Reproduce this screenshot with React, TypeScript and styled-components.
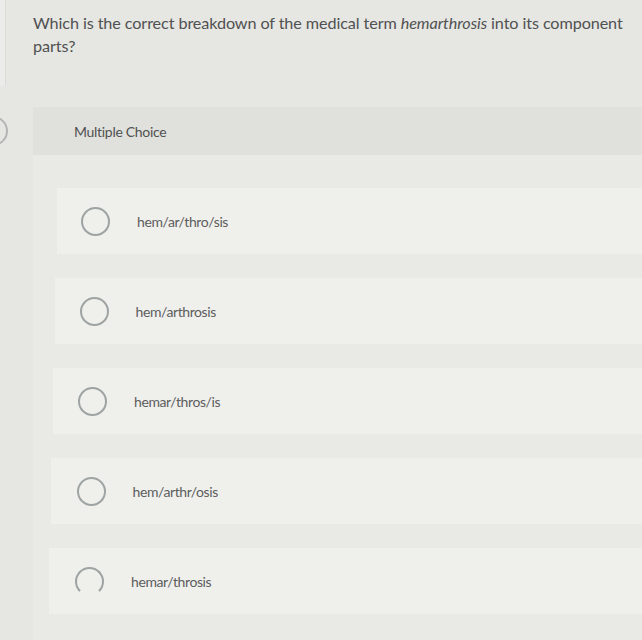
import React from "react";
import styled, { createGlobalStyle } from "styled-components";

const textColor = "#505151";
const ringColor = "#9ea3a3";

const GlobalStyle = createGlobalStyle`
  html, body {
    margin: 0;
    padding: 0;
    background: #e6e6e3;
    font-family: Lato, "Open Sans", Arial, sans-serif;
  }
`;

const Page = styled.div`
  display: flex;
  width: 642px;
  height: 640px;
  overflow: hidden;
  background: #e6e6e3;
`;

const Rail = styled.div`
  width: 33px;
  flex-shrink: 0;
  display: flex;
  flex-direction: column;
`;

const RailLine = styled.div`
  height: 86px;
  width: 5px;
  border-right: 1px solid #dcdcd9;
  background: #ebebe9;
`;

const RailKnob = styled.div`
  margin-top: 30px;
  margin-left: -22px;
  width: 26px;
  height: 26px;
  border: 2px solid #b4b6b4;
  border-radius: 50%;
`;

const Main = styled.div`
  flex: 1;
  display: flex;
  flex-direction: column;
  min-width: 0;
`;

const Question = styled.div`
  margin: 11px 14px 0 0;
  height: 96px;
  font-size: 16.2px;
  line-height: 23px;
  color: ${textColor};
  letter-spacing: -0.1px;
`;

const QuestionLine = styled.span`
  display: block;
  white-space: nowrap;

  em {
    font-style: italic;
  }
`;

const Panel = styled.div`
  display: flex;
  flex-direction: column;
  flex: 1;
  background: #e9e9e6;
`;

const PanelHeader = styled.div`
  height: 48px;
  display: flex;
  align-items: center;
  padding-left: 41px;
  background: #e0e0dc;
  font-size: 14px;
  color: ${textColor};
  letter-spacing: -0.3px;
`;

const Options = styled.div`
  display: flex;
  flex-direction: column;
  gap: 24px;
  padding: 33px 0 0 24px;
`;

const Option = styled.label<{ $shift: number }>`
  height: 66px;
  display: flex;
  align-items: center;
  margin-left: ${(p) => -p.$shift * 2}px;
  padding-left: ${(p) => 24 + p.$shift / 2}px;
  background: #efefec;
  cursor: pointer;
`;

const Radio = styled.span<{ $cut?: boolean }>`
  width: 25px;
  height: 25px;
  flex-shrink: 0;
  border: 2px solid ${ringColor};
  border-bottom-color: ${(p) => (p.$cut ? "transparent" : ringColor)};
  border-radius: 50%;
`;

const OptionText = styled.span`
  margin-left: 27px;
  font-size: 14px;
  color: #5c5d5d;
  letter-spacing: -0.4px;
`;

const options = [
  "hem/ar/thro/sis",
  "hem/arthrosis",
  "hemar/thros/is",
  "hem/arthr/osis",
  "hemar/throsis",
];

export default function App() {
  return (
    <>
      <GlobalStyle />
      <Page>
        <Rail>
          <RailLine />
          <RailKnob />
        </Rail>
        <Main>
          <Question>
            <QuestionLine>
              Which is the correct breakdown of the medical term <em>hemarthrosis</em> into its
              component
            </QuestionLine>
            <QuestionLine>parts?</QuestionLine>
          </Question>
          <Panel>
            <PanelHeader>Multiple Choice</PanelHeader>
            <Options>
              {options.map((o, i) => (
                <Option key={o} $shift={i}>
                  <Radio $cut={i === options.length - 1} />
                  <OptionText>{o}</OptionText>
                </Option>
              ))}
            </Options>
          </Panel>
        </Main>
      </Page>
    </>
  );
}
